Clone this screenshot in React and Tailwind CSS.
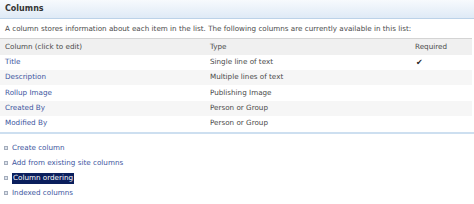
import React from "react";

const rows = [
  { name: "Title", type: "Single line of text", required: true },
  { name: "Description", type: "Multiple lines of text" },
  { name: "Rollup Image", type: "Publishing Image" },
  { name: "Created By", type: "Person or Group" },
  { name: "Modified By", type: "Person or Group" },
];

const links = [
  "Create column",
  "Add from existing site columns",
  "Column ordering",
  "Indexed columns",
];

function Bullet() {
  return (
    <span className="w-[4px] h-[4px] border border-[#a3acbb] bg-[#dde3ec] shrink-0" />
  );
}

export default function App() {
  return (
    <div
      className="w-[474px] h-[204px] bg-white overflow-hidden text-[7.2px] text-[#4a4a4a]"
      style={{ fontFamily: '"DejaVu Sans", Verdana, sans-serif' }}
    >
      <div className="h-[19px] flex items-center px-[5px] bg-gradient-to-b from-[#f7fafd] to-[#dfeaf6] border-b border-[#bcd2e8]">
        <span className="font-bold text-[8px] text-[#333]">Columns</span>
      </div>
      <div className="h-[19px] flex items-center px-[5px] pt-[1px]">
        A column stores information about each item in the list. The following columns are currently available in this list:
      </div>
      <div className="mr-[2px]">
        <div className="grid grid-cols-[205px_205px_1fr] h-[17px] items-center bg-[#f0f0f0] border-t border-[#d4d4d4]">
          <span className="pl-[5px]">Column (click to edit)</span>
          <span className="pl-[5px]">Type</span>
          <span className="pl-[5px]">Required</span>
        </div>
        {rows.map((r, i) => (
          <div
            key={r.name}
            className={`grid grid-cols-[205px_205px_1fr] h-[15.2px] items-center ${
              i % 2 === 1 ? "bg-[#f6f6f6]" : "bg-white"
            }`}
          >
            <span className="pl-[5px] text-[#3d55a0]">{r.name}</span>
            <span className="pl-[5px]">{r.type}</span>
            <span className="pl-[6px] text-[#222] text-[8px] leading-none">
              {r.required ? "✔" : ""}
            </span>
          </div>
        ))}
      </div>
      <div className="h-[2px] mt-[1px] bg-[#cddff0]" />
      <div className="flex flex-col pt-[7px]">
        {links.map((l) => (
          <div key={l} className="h-[15px] flex items-center gap-[4px] pl-[4px]">
            <Bullet />
            <span
              className={
                l === "Column ordering"
                  ? "bg-[#0a1e5c] text-white px-[1px]"
                  : "text-[#3d55a0]"
              }
            >
              {l}
            </span>
          </div>
        ))}
      </div>
    </div>
  );
}
